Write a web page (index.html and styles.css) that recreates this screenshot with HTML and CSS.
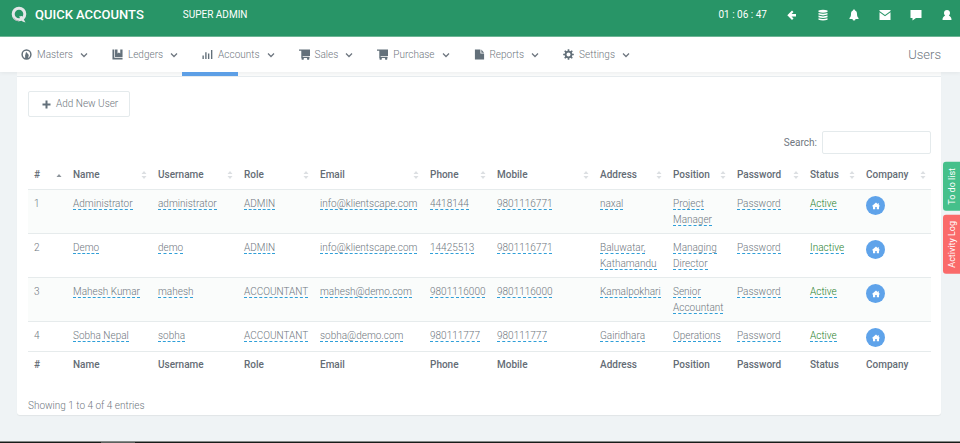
FILE: index.html
```
<!DOCTYPE html>
<html lang="en">
<head>
    <meta charset="UTF-8">
    <meta name="viewport" content="width=device-width, initial-scale=1.0">
    <title>Quick Accounts - Users</title>
    <link rel="stylesheet" href="styles.css">
</head>
<body>
<svg class="sprite" aria-hidden="true">
    <symbol id="chevron" viewBox="0 0 8 8"><path d="M1 2.5l3 3 3-3" fill="none" stroke="currentColor" stroke-width="1.3"/></symbol>
    <symbol id="sort" viewBox="0 0 6 10"><path d="M3 1l2.500 3h-5zM3 9l2.500-3h-5z"/></symbol>
    <symbol id="sort-up" viewBox="0 0 6 10"><path d="M3 4l2.500 3h-5z"/></symbol>
    <symbol id="home" viewBox="0 0 8 8"><path d="M4 .6L0 4l.5.6L1 4.200V7.200h2.200V5h1.600v2.200H7v-3l.5.4L8 4 6.800 3V1.200h-1v1z"/></symbol>
    <symbol id="cart" viewBox="0 0 12 12"><path d="M0 .500h12V7.500H4V8.500h7.500v1.200H2.500V2H0z"/><circle cx="4" cy="10.500" r="1.300"/><circle cx="10" cy="10.500" r="1.300"/></symbol>
</svg>

<header class="topbar">
    <a href="#" class="brand">
        <svg class="logo" viewBox="0 0 16 17">
            <circle cx="8" cy="8" r="5.800" fill="none" stroke="#e4e6e8" stroke-width="3"/>
            <path d="M2.500 12A7 7 0 0 0 8 15" fill="none" stroke="#aab4b4" stroke-width="1"/>
            <path d="M8 10.500l3-.5 3.500 6.500-3-1z" fill="#e4e6e8"/>
        </svg>
        <span>QUICK ACCOUNTS</span>
    </a>
    <span class="role">SUPER ADMIN</span>
    <div class="tools">
        <span class="clock">01 : 06 : 47</span>
        <button type="button" aria-label="Back"><svg viewBox="0 0 12 12"><path d="M6 1.500L1.300 6.200 6 11l1.500-1.500-2-2H10V5H5.500l2-2z"/></svg></button>
        <button type="button" aria-label="Database"><svg viewBox="0 0 12 12"><path d="M1.500 1.500Q6-.2 10.500 1.500V3Q6 4.500 1.500 3zM1.500 4Q6 5.500 10.500 4v1.600Q6 7.200 1.500 5.600zM1.500 6.600Q6 8.200 10.500 6.600v1.600Q6 9.800 1.500 8.200zM1.500 9.200Q6 10.800 10.500 9.200v1.600Q6 12.200 1.500 10.800z"/></svg></button>
        <button type="button" aria-label="Notifications"><svg viewBox="0 0 12 12"><path d="M6 .5c.8 0 1 .6 1 1 1.500.5 2 1.800 2 3.500 0 2 .5 3 1.500 4v1h-3a1.500 1.500 0 0 1-3 0h-3V9C2.500 8 3 7 3 5c0-1.700.5-3 2-3.500 0-.4.200-1 1-1z"/></svg></button>
        <button type="button" aria-label="Mail"><svg viewBox="0 0 12 12"><path d="M.5 1h11v1L6 6 .5 2zM.5 3.200L6 7.200l5.500-4V11H.5z"/></svg></button>
        <button type="button" aria-label="Messages"><svg viewBox="0 0 12 12"><path d="M.5 1h11v8H6l-3.500 2.500V9h-2z"/></svg></button>
        <button type="button" aria-label="Account"><svg viewBox="0 0 12 12"><path d="M6 1c1.800 0 3 1.200 3 3 0 1.200-.5 2.200-1.200 2.800C9.500 7.500 10.500 8.500 10.500 11h-9c0-2.500 1-3.500 2.700-4.200C3.500 6.200 3 5.200 3 4c0-1.800 1.200-3 3-3z"/></svg></button>
    </div>
</header>

<nav class="menubar">
    <ul class="menu">
        <li><a href="#">
            <svg class="icon" viewBox="0 0 12 12"><circle cx="6" cy="6" r="4.800" fill="none" stroke="currentColor" stroke-width="1.600"/><path d="M5.500 3l3 3.500-1 4.500h-3V7z"/></svg>
            Masters <svg class="caret"><use href="#chevron"/></svg></a></li>
        <li><a href="#">
            <svg class="icon" viewBox="0 0 12 12"><path d="M.500.500H2.500V9.500H11.500V11.500H.500zM3.300.500H6V5l1.500-1.200L9 5V.500h2.500V8.700H3.300z"/></svg>
            Ledgers <svg class="caret"><use href="#chevron"/></svg></a></li>
        <li class="active"><a href="#">
            <svg class="icon" viewBox="0 0 12 12"><path d="M.500 7H2v4H.500zM3.500 3.500H5V11H3.500zM6.500 5H8v6H6.500zM9.800 1h1.500v10H9.800z"/></svg>
            Accounts <svg class="caret"><use href="#chevron"/></svg></a></li>
        <li><a href="#">
            <svg class="icon"><use href="#cart"/></svg>
            Sales <svg class="caret"><use href="#chevron"/></svg></a></li>
        <li><a href="#">
            <svg class="icon"><use href="#cart"/></svg>
            Purchase <svg class="caret"><use href="#chevron"/></svg></a></li>
        <li><a href="#">
            <svg class="icon" viewBox="0 0 12 12"><path d="M1 .500h6V5h4v6.500H1zM8 .500L11 4H8z"/></svg>
            Reports <svg class="caret"><use href="#chevron"/></svg></a></li>
        <li><a href="#">
            <svg class="icon" viewBox="0 0 12 12"><circle cx="6" cy="6" r="3.200" fill="none" stroke="currentColor" stroke-width="2"/><path d="M6 .200v2.500M6 9.300v2.500M.200 6h2.500M9.300 6h2.500M1.900 1.900l1.700 1.700M8.400 8.400l1.700 1.700M1.900 10.100l1.700-1.700M8.400 3.600l1.700-1.700" stroke="currentColor" stroke-width="1.800"/></svg>
            Settings <svg class="caret"><use href="#chevron"/></svg></a></li>
    </ul>
    <h1>Users</h1>
</nav>

<main>
    <div class="panel-top"></div>
    <section class="panel">
        <button type="button" class="add-btn">
            <svg viewBox="0 0 9 9"><path d="M3.500.500h2v3h3v2h-3v3h-2v-3h-3v-2h3z"/></svg>
            Add New User
        </button>

        <div class="search">
            <label for="search">Search:</label>
            <input type="search" id="search">
        </div>

        <table class="users">
            <colgroup>
                <col class="c-num"><col class="c-name"><col class="c-username"><col class="c-role">
                <col class="c-email"><col class="c-phone"><col class="c-mobile"><col class="c-address">
                <col class="c-position"><col class="c-password"><col class="c-status"><col class="c-company">
            </colgroup>
            <thead>
                <tr>
                    <th><button type="button" class="sorted"># <svg><use href="#sort-up"/></svg></button></th>
                    <th><button type="button">Name <svg><use href="#sort"/></svg></button></th>
                    <th><button type="button">Username <svg><use href="#sort"/></svg></button></th>
                    <th><button type="button">Role <svg><use href="#sort"/></svg></button></th>
                    <th><button type="button">Email <svg><use href="#sort"/></svg></button></th>
                    <th><button type="button">Phone <svg><use href="#sort"/></svg></button></th>
                    <th><button type="button">Mobile <svg><use href="#sort"/></svg></button></th>
                    <th><button type="button">Address <svg><use href="#sort"/></svg></button></th>
                    <th><button type="button">Position <svg><use href="#sort"/></svg></button></th>
                    <th><button type="button">Password <svg><use href="#sort"/></svg></button></th>
                    <th><button type="button">Status <svg><use href="#sort"/></svg></button></th>
                    <th><button type="button">Company <svg><use href="#sort"/></svg></button></th>
                </tr>
            </thead>
            <tbody>
                <tr>
                    <td>1</td>
                    <td><a href="#">Administrator</a></td>
                    <td><a href="#">administrator</a></td>
                    <td><a href="#">ADMIN</a></td>
                    <td><a href="#">info@klientscape.com</a></td>
                    <td><a href="#">4418144</a></td>
                    <td><a href="#">9801116771</a></td>
                    <td class="wrap"><a href="#">naxal</a></td>
                    <td class="wrap"><a href="#">Project Manager</a></td>
                    <td><a href="#">Password</a></td>
                    <td class="status"><a href="#">Active</a></td>
                    <td><button type="button" class="home-btn" aria-label="Company"><svg><use href="#home"/></svg></button></td>
                </tr>
                <tr>
                    <td>2</td>
                    <td><a href="#">Demo</a></td>
                    <td><a href="#">demo</a></td>
                    <td><a href="#">ADMIN</a></td>
                    <td><a href="#">info@klientscape.com</a></td>
                    <td><a href="#">14425513</a></td>
                    <td><a href="#">9801116771</a></td>
                    <td class="wrap"><a href="#">Baluwatar, Kathamandu</a></td>
                    <td class="wrap"><a href="#">Managing Director</a></td>
                    <td><a href="#">Password</a></td>
                    <td class="status"><a href="#">Inactive</a></td>
                    <td><button type="button" class="home-btn" aria-label="Company"><svg><use href="#home"/></svg></button></td>
                </tr>
                <tr>
                    <td>3</td>
                    <td><a href="#">Mahesh Kumar</a></td>
                    <td><a href="#">mahesh</a></td>
                    <td><a href="#">ACCOUNTANT</a></td>
                    <td><a href="#">mahesh@demo.com</a></td>
                    <td><a href="#">9801116000</a></td>
                    <td><a href="#">9801116000</a></td>
                    <td class="wrap"><a href="#">Kamalpokhari</a></td>
                    <td class="wrap"><a href="#">Senior Accountant</a></td>
                    <td><a href="#">Password</a></td>
                    <td class="status"><a href="#">Active</a></td>
                    <td><button type="button" class="home-btn" aria-label="Company"><svg><use href="#home"/></svg></button></td>
                </tr>
                <tr>
                    <td>4</td>
                    <td><a href="#">Sobha Nepal</a></td>
                    <td><a href="#">sobha</a></td>
                    <td><a href="#">ACCOUNTANT</a></td>
                    <td><a href="#">sobha@demo.com</a></td>
                    <td><a href="#">980111777</a></td>
                    <td><a href="#">980111777</a></td>
                    <td class="wrap"><a href="#">Gairidhara</a></td>
                    <td class="wrap"><a href="#">Operations</a></td>
                    <td><a href="#">Password</a></td>
                    <td class="status"><a href="#">Active</a></td>
                    <td><button type="button" class="home-btn" aria-label="Company"><svg><use href="#home"/></svg></button></td>
                </tr>
            </tbody>
            <tfoot>
                <tr>
                    <th>#</th>
                    <th>Name</th>
                    <th>Username</th>
                    <th>Role</th>
                    <th>Email</th>
                    <th>Phone</th>
                    <th>Mobile</th>
                    <th>Address</th>
                    <th>Position</th>
                    <th>Password</th>
                    <th>Status</th>
                    <th>Company</th>
                </tr>
            </tfoot>
        </table>

        <p class="info">Showing 1 to 4 of 4 entries</p>
    </section>
</main>

<aside class="side-tabs">
    <button type="button" class="todo">To do list</button>
    <button type="button" class="log">Activity Log</button>
</aside>

<footer class="bottom-bar"><span></span></footer>
</body>
</html>
```
FILE: styles.css
```
* {
    box-sizing: border-box;
}

body {
    margin: 0;
    min-height: 100vh;
    display: flex;
    flex-direction: column;
    font-family: Roboto, "Liberation Sans", sans-serif;
    font-size: 10px;
    font-weight: 300;
    line-height: 16px;
    color: #6f7780;
    background-color: #eff3f5;
}

a {
    color: inherit;
    text-decoration: none;
}

button {
    font: inherit;
    color: inherit;
    border: 0;
    padding: 0;
    background: none;
    cursor: pointer;
}

svg {
    fill: currentColor;
}

.sprite {
    position: absolute;
    width: 0;
    height: 0;
}

/* Top bar */
.topbar {
    display: flex;
    align-items: center;
    height: 37px;
    padding: 0 7px 7px 11px;
    color: #fff;
    background-color: #289567;
    border-bottom: 1px solid #6fb897;
}

.brand {
    display: flex;
    align-items: center;
    gap: 8px;
    font-size: 13px;
    font-weight: 500;
}

.logo {
    width: 16px;
    height: 17px;
}

.role {
    margin-left: 39px;
    font-weight: 400;
}

.tools {
    display: flex;
    align-items: center;
    gap: 19px;
    margin-left: auto;
}

.clock {
    font-weight: 400;
}

.tools button,
.tools svg {
    display: block;
    width: 12px;
    height: 12px;
}

/* Menu */
.menubar {
    display: flex;
    align-items: center;
    justify-content: space-between;
    height: 35px;
    padding: 0 19px 0 1px;
    background-color: #fff;
    box-shadow: 0 1px 4px rgba(0, 0, 0, 0.06);
    position: relative;
}

.menu {
    display: flex;
    gap: 4px;
    margin: 0;
    padding: 0;
    list-style: none;
}

.menu a {
    display: flex;
    align-items: center;
    height: 35px;
    padding-left: 20px;
}

.menu .icon {
    width: 11px;
    height: 11px;
    margin-right: 5px;
    color: #63707a;
}

.menu .caret {
    width: 8px;
    height: 8px;
    margin-left: 7px;
}

.menu .active {
    position: relative;
}

.menu .active::after {
    content: "";
    position: absolute;
    left: 0;
    top: 35px;
    width: 56px;
    height: 4px;
    background-color: #5d9fe6;
}

.menubar h1 {
    margin: 0;
    font-size: 13px;
    font-weight: 300;
}

/* Content */
main {
    flex: 1;
    padding: 0 19px 26px 17px;
}

.panel-top {
    height: 5px;
    background-color: #fafbfb;
    border-bottom: 1px solid #e6ebee;
}

.panel {
    padding: 14px 10px 0 11px;
    background-color: #fff;
    border-radius: 0 0 3px 3px;
    box-shadow: 0 1px 1px rgba(0, 0, 0, 0.06);
}

.add-btn {
    display: flex;
    align-items: center;
    gap: 5px;
    height: 26px;
    padding: 0 11px 0 13px;
    border: 1px solid #e4eaec;
    border-radius: 2px;
}

.add-btn svg {
    width: 9px;
    height: 9px;
    color: #63707a;
}

.search {
    display: flex;
    align-items: center;
    justify-content: flex-end;
    gap: 5px;
    margin-top: 14px;
    font-weight: 400;
}

.search input {
    width: 109px;
    height: 23px;
    padding: 0 6px;
    font: inherit;
    color: inherit;
    background-color: #fff;
    border: 1px solid #e4eaec;
    border-radius: 2px;
}

/* Users table */
.users {
    width: 100%;
    margin-top: 7px;
    table-layout: fixed;
    border-collapse: separate;
    border-spacing: 0;
}

.c-num { width: 39px; }
.c-name { width: 85px; }
.c-username { width: 86px; }
.c-role { width: 76px; }
.c-email { width: 110px; }
.c-phone { width: 67px; }
.c-mobile { width: 103px; }
.c-address { width: 73px; }
.c-position { width: 64px; }
.c-password { width: 73px; }
.c-status { width: 56px; }
.c-company { width: 71px; }

.users th,
.users td {
    padding: 6px 6px 5px;
    text-align: left;
    vertical-align: top;
    white-space: nowrap;
}

.users th {
    font-weight: 500;
    color: #646c75;
}

.users thead th {
    padding: 6px 5px 6px 6px;
}

.users td {
    border-top: 1px solid #e6ebec;
}

.users td.wrap {
    white-space: normal;
}

.users tfoot th {
    padding: 5px 6px;
    border-top: 1px solid #e6ebec;
}

.users tbody tr:nth-child(odd) {
    background-color: #fafcfb;
}

.users thead button {
    display: flex;
    align-items: center;
    justify-content: space-between;
    width: 100%;
}

.users thead svg {
    width: 6px;
    height: 10px;
    color: #dcdfe2;
}

.users thead .sorted svg {
    color: #8c949b;
}

.users td a {
    border-bottom: 1px dashed #2f9fd8;
}

.users .status a {
    color: #1f7f2c;
}

.home-btn {
    display: flex;
    align-items: center;
    justify-content: center;
    width: 19px;
    height: 19px;
    margin-bottom: -1px;
    color: #fff;
    background-color: #5fa3ea;
    border-radius: 50%;
}

.home-btn svg {
    width: 8px;
    height: 8px;
}

.info {
    margin: 0;
    padding: 20px 0 1px;
}

/* Tabs on the right edge */
.side-tabs {
    position: fixed;
    right: 0;
    top: 162px;
    display: flex;
    flex-direction: column;
    gap: 4px;
}

.side-tabs button {
    width: 17px;
    padding: 6px 0;
    color: #fff;
    font-size: 9px;
    font-weight: 400;
    writing-mode: vertical-rl;
    transform: rotate(180deg);
    border-radius: 0 3px 3px 0;
}

.side-tabs .todo {
    background-color: #45c08b;
}

.side-tabs .log {
    background-color: #fa6a6a;
}

.bottom-bar {
    height: 2px;
    background-color: #171b18;
    border-top: 1px solid #858a88;
}

.bottom-bar span {
    display: block;
    width: 34px;
    height: 1px;
    margin-left: 101px;
    background-color: #5b605d;
}
```
